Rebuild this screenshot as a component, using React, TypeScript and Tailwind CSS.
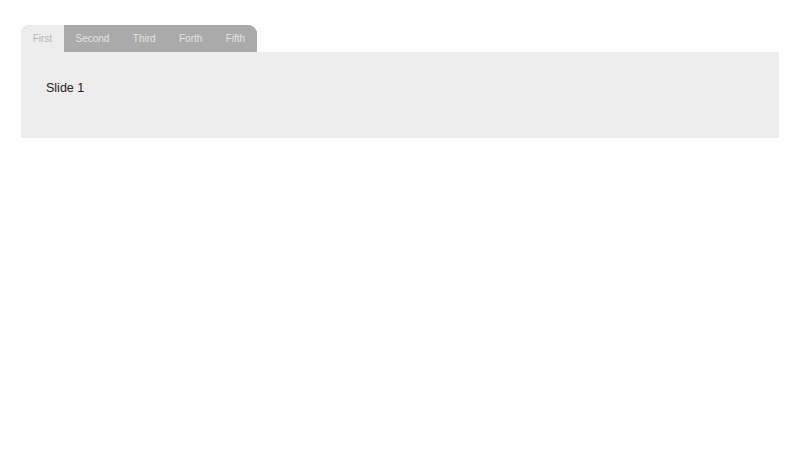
import React, { useState } from "react";

const tabs = ["First", "Second", "Third", "Forth", "Fifth"];

export default function App() {
  const [active, setActive] = useState(0);

  return (
    <div className="min-h-screen bg-white px-[21px] pt-[25px] font-['Liberation_Sans',Arial,sans-serif]">
      {/* Tab bar */}
      <div className="flex">
        <div className="flex overflow-hidden rounded-t-[9px] bg-[#aaaaaa]">
          {tabs.map((tab, i) => (
            <button
              key={tab}
              type="button"
              onClick={() => setActive(i)}
              className={
                i === active
                  ? "h-[27px] px-[11.7px] text-[10px] leading-[27px] bg-[#ededed] text-[#b4b4b4]"
                  : "h-[27px] px-[11.7px] text-[10px] leading-[27px] bg-[#aaaaaa] text-[#e4e4e4]"
              }
            >
              {tab}
            </button>
          ))}
        </div>
      </div>

      {/* Panel */}
      <div className="h-[86px] bg-[#ededed] px-[25px] pt-[28px] text-[12.5px] leading-[16px] text-[#222222]">
        Slide {active + 1}
      </div>
    </div>
  );
}
